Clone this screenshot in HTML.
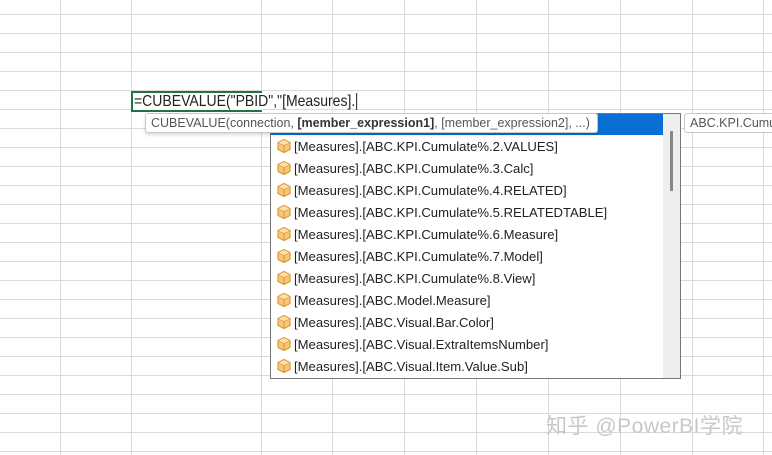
<!DOCTYPE html>
<html><head><meta charset="utf-8"><style>
*{margin:0;padding:0;box-sizing:border-box}
body{width:772px;height:455px;overflow:hidden;position:relative;background:#fff;font-family:"Liberation Sans","Noto Sans CJK SC",sans-serif;
background-image:linear-gradient(to bottom,transparent 14px,#dadada 14px,#dadada 15px,transparent 15px);background-size:100% 19px;}
.v{position:absolute;top:0;bottom:0;width:1px;background:#dadada}
.cell{position:absolute;left:131px;top:91px;width:131px;height:21px;border:2px solid #217346;border-right:none;background:#fff}
.ftext{position:absolute;left:134px;top:91px;height:21px;line-height:21px;font-size:16px;color:#222;white-space:nowrap;transform:scaleX(0.875);transform-origin:0 0}
.tip{position:absolute;left:145px;top:113px;width:453px;height:20px;border:1px solid #c8c8c8;border-radius:3px;background:#fff;font-size:12.5px;line-height:18px;padding-left:5px;color:#555;white-space:nowrap;box-shadow:0 2px 3px rgba(0,0,0,.15);z-index:3}
.dd{position:absolute;left:270px;top:113px;width:411px;height:266px;border:1px solid #777;background:#fff;z-index:2}
.blue{position:absolute;left:0;top:0;width:392px;height:21px;background:#0a6fd4}
.sb{position:absolute;right:0;top:0;width:17px;height:100%;background:#eee}
.thumb{position:absolute;left:7px;top:17px;width:3px;height:60px;background:#888}
.item{position:absolute;left:5px;height:22px;line-height:22px;font-size:13.1px;color:#222;white-space:nowrap}
.item svg{vertical-align:-3px;margin-right:2px}
.tip2{position:absolute;left:684px;top:113px;width:100px;height:20px;border:1px solid #c8c8c8;border-radius:3px;background:#fff;font-size:12.5px;line-height:18px;padding-left:5px;color:#555;white-space:nowrap}
.wm{position:absolute;left:546px;top:410px;font-size:21px;color:#c8c8c8;letter-spacing:.5px;white-space:nowrap}
</style></head><body>
<div class="v" style="left:60px"></div><div class="v" style="left:131px"></div><div class="v" style="left:261px"></div><div class="v" style="left:332px"></div><div class="v" style="left:404px"></div><div class="v" style="left:476px"></div><div class="v" style="left:548px"></div><div class="v" style="left:620px"></div><div class="v" style="left:692px"></div><div class="v" style="left:763px"></div>
<div class="cell"></div>
<div class="ftext">=CUBEVALUE("PBID","[Measures].<span style="border-left:1px solid #000;margin-left:1px"></span></div>
<div class="tip">CUBEVALUE(connection, <b style="color:#333">[member_expression1]</b>, [member_expression2], ...)</div>
<div class="dd">
<div class="blue"></div>
<div class="sb"><div class="thumb"></div></div>
<div id="items"></div>
</div>
<div class="tip2">ABC.KPI.Cumulate</div>
<div class="wm">知乎 @PowerBI学院</div>
<script>
var names=["[ABC.KPI.Cumulate%.2.VALUES]","[ABC.KPI.Cumulate%.3.Calc]","[ABC.KPI.Cumulate%.4.RELATED]","[ABC.KPI.Cumulate%.5.RELATEDTABLE]","[ABC.KPI.Cumulate%.6.Measure]","[ABC.KPI.Cumulate%.7.Model]","[ABC.KPI.Cumulate%.8.View]","[ABC.Model.Measure]","[ABC.Visual.Bar.Color]","[ABC.Visual.ExtraItemsNumber]","[ABC.Visual.Item.Value.Sub]"];
var ic='<svg width="16" height="16" viewBox="0 0 16 16"><path d="M8 1.5L14 4.5V11.5L8 14.5L2 11.5V4.5Z" fill="#f8c77a" stroke="#e0962e" stroke-width="1.2" stroke-linejoin="round"/><path d="M2 4.5L8 7.5L14 4.5M8 7.5V14.5" fill="none" stroke="#e0962e" stroke-width="1.1"/><path d="M2.5 4.8L8 2L13.5 4.8L8 7.3Z" fill="#fde0ad"/></svg>';
var h="";for(var i=0;i<names.length;i++){h+='<div class="item" style="top:'+(22+i*22)+'px">'+ic+'[Measures].'+names[i]+'</div>';}
document.getElementById("items").innerHTML=h;
</script>
</body></html>
